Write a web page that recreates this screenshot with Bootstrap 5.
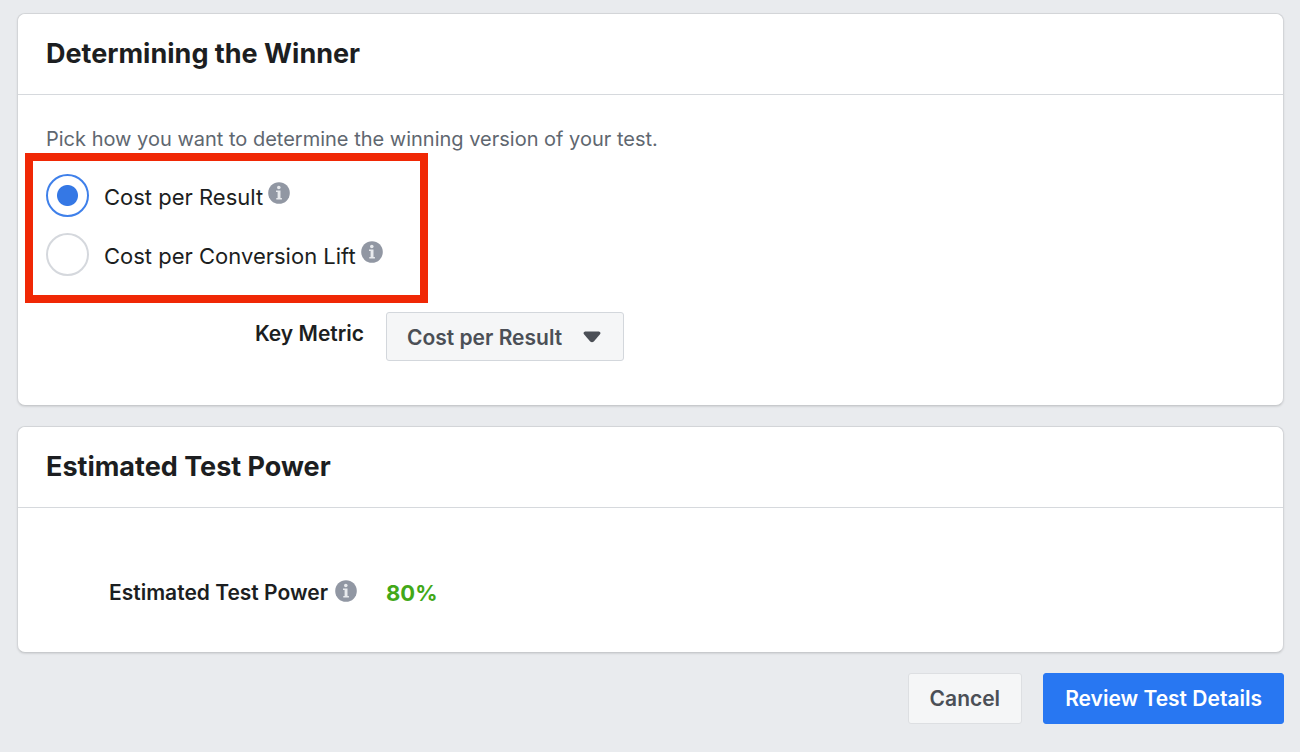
<!DOCTYPE html>
<html lang="en">
<head>
<meta charset="utf-8">
<meta name="viewport" content="width=device-width, initial-scale=1">
<title>Test Setup</title>
<link href="https://cdn.jsdelivr.net/npm/bootstrap@5.3.0/dist/css/bootstrap.min.css" rel="stylesheet">
<style>
  body {
    background: #e9ebee;
    color: #1c1e21;
    font-family: Inter, "Liberation Sans", sans-serif;
    font-size: 22px;
    line-height: 28px;
  }
  .page { padding: 13px 16px 28px 17px; }
  .panels { gap: 20px; }
  .panel {
    color: inherit;
    border: 1px solid #d3d5d8;
    border-bottom-color: #c8cacd;
    border-radius: 8px;
    box-shadow: 0 1px 2px rgba(0, 0, 0, .1);
  }
  .panel .card-header {
    background: #fff;
    border-bottom: 1px solid #d6d9dd;
    border-radius: 8px 8px 0 0;
    padding: 20px 28px;
  }
  .panel h2 { font-size: 27px; line-height: 40px; font-weight: 700; }
  .winner-body { padding: 30px 28px 44px; }
  .power-body { padding: 71px 28px 45px; }
  .intro { color: #606770; font-size: 20px; }
  .choices { width: 360px; margin: 21px 0 36px; gap: 16px; }
  .highlight {
    inset: -21px -22px -27px -21px;
    border: 8px solid #f02805;
    pointer-events: none;
  }
  .choice { gap: 15px; }
  .choice .form-check-input {
    width: 43px;
    height: 43px;
    margin: 0;
    border: 2px solid #d5d8dd;
  }
  .choice .form-check-input:checked {
    background: radial-gradient(circle, #3578e5 10px, #fff 11px);
    border-color: #3f80ea;
  }
  .choice label { padding-top: 2px; }
  .info { width: 22px; height: 22px; flex: none; }
  .choice .info { margin: 0 0 5px 5px; }
  .field-label { width: 340px; font-weight: 600; font-size: 21px; }
  .metric-label { padding: 8px 22px 0 0; }
  .power-label { padding-right: 29px; gap: 7px; }
  .power-label .info { margin-bottom: 5px; }
  .metric-select {
    width: 238px;
    height: 49px;
    padding: 2px 48px 0 20px;
    border: 1px solid #d3d7dc;
    border-radius: 3px;
    color: #4b4f56;
    font-size: 21px;
    font-weight: 600;
    background: #f5f6f7 url("data:image/svg+xml,%3Csvg xmlns='http://www.w3.org/2000/svg' viewBox='0 0 18 12'%3E%3Cpath d='M2 .5h14q2.500 1 .8 3l-6 7q-1.800 1.600-3.600 0l-6-7Q-.5 1.500 2 .5z' fill='%234b4f56'/%3E%3C/svg%3E") no-repeat right 22px center / 18px 12px;
  }
  .power-value { color: #42a818; font-weight: 700; font-size: 22px; }
  .actions { gap: 21px; margin-top: 20px; }
  .action {
    height: 51px;
    padding: 0 21px;
    border-radius: 3px;
    font-size: 21px;
    font-weight: 600;
  }
  .action-cancel { --bs-btn-bg: #f5f6f7; --bs-btn-color: #4b4f56; --bs-btn-border-color: #dddfe2; }
  .action-review { --bs-btn-bg: #2877f2; --bs-btn-border-color: #2877f2; }
</style>
</head>
<body>
<svg class="d-none" aria-hidden="true">
  <symbol id="info-icon" viewBox="0 0 22 22">
    <circle cx="11" cy="11" r="10.800" fill="#9197a3"/>
    <circle cx="10.800" cy="5.500" r="1.800" fill="#e8eaed"/>
    <path d="M8 8.500h4.500v7.500h1.400v1.500H8.300V16h1.300v-6H8z" fill="#e8eaed"/>
  </symbol>
</svg>
<main class="page container-fluid">
  <div class="panels d-flex flex-column">
    <section class="card panel">
      <div class="card-header"><h2 class="mb-0">Determining the Winner</h2></div>
      <div class="card-body winner-body">
        <p class="intro mb-0">Pick how you want to determine the winning version of your test.</p>
        <fieldset class="choices position-relative d-flex flex-column">
          <div class="choice d-flex align-items-center">
            <input class="form-check-input" type="radio" name="winner" id="by-result" checked>
            <div class="d-flex align-items-center"><label for="by-result">Cost per Result</label><svg class="info" role="img" aria-label="Info"><use href="#info-icon"/></svg></div>
          </div>
          <div class="choice d-flex align-items-center">
            <input class="form-check-input" type="radio" name="winner" id="by-lift">
            <div class="d-flex align-items-center"><label for="by-lift">Cost per Conversion Lift</label><svg class="info" role="img" aria-label="Info"><use href="#info-icon"/></svg></div>
          </div>
          <div class="highlight position-absolute"></div>
        </fieldset>
        <div class="d-flex">
          <label class="field-label metric-label text-end" for="key-metric">Key Metric</label>
          <select class="metric-select form-select" id="key-metric"><option>Cost per Result</option></select>
        </div>
      </div>
    </section>
    <section class="card panel">
      <div class="card-header"><h2 class="mb-0">Estimated Test Power</h2></div>
      <div class="card-body power-body d-flex align-items-center">
        <div class="field-label power-label d-flex align-items-center justify-content-end">Estimated Test Power<svg class="info" role="img" aria-label="Info"><use href="#info-icon"/></svg></div>
        <div class="power-value">80%</div>
      </div>
    </section>
  </div>
  <div class="actions d-flex justify-content-end">
    <button type="button" class="btn action action-cancel">Cancel</button>
    <button type="button" class="btn btn-primary action action-review">Review Test Details</button>
  </div>
</main>
<script src="https://cdn.jsdelivr.net/npm/bootstrap@5.3.0/dist/js/bootstrap.bundle.min.js"></script>
</body>
</html>
